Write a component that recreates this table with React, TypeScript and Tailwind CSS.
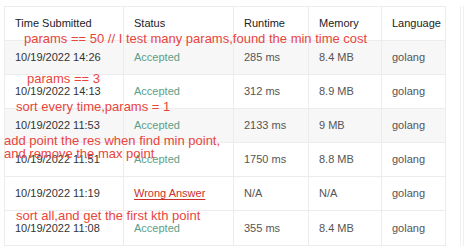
const rows = [
  { time: '10/19/2022 14:26', status: 'Accepted', runtime: '285 ms', memory: '8.4 MB', striped: true },
  { time: '10/19/2022 14:13', status: 'Accepted', runtime: '312 ms', memory: '8.9 MB', striped: false },
  { time: '10/19/2022 11:53', status: 'Accepted', runtime: '2133 ms', memory: '9 MB', striped: true },
  { time: '10/19/2022 11:51', status: 'Accepted', runtime: '1750 ms', memory: '8.8 MB', striped: false },
  { time: '10/19/2022 11:19', status: 'Wrong Answer', runtime: 'N/A', memory: 'N/A', striped: false },
  { time: '10/19/2022 11:08', status: 'Accepted', runtime: '355 ms', memory: '8.4 MB', striped: false },
];

const cols = 'grid grid-cols-[119px_110px_75px_73px_64px]';
const cell = 'flex items-center border-r border-[#ececec] pl-[10px] last:border-r-0';

const notes = [
  { text: 'params == 50 // I test many params,found the min time cost', cls: 'left-[24px] top-[31px]' },
  { text: 'params == 3', cls: 'left-[27px] top-[71px]' },
  { text: 'sort every time,params = 1', cls: 'left-[16px] top-[99px]' },
  { text: 'add point the res when find min point,', cls: 'left-[4px] top-[133px]' },
  { text: 'and remove the max point', cls: 'left-[4px] top-[146px]' },
  { text: 'sort all,and get the first kth point', cls: 'left-[16px] top-[208px]' },
];

export default function App() {
  return (
    <div className="relative h-[249px] w-[474px] overflow-hidden bg-white font-['Liberation_Sans',sans-serif]">
      <div className="flex pl-[4px] pt-[6px]">
        <div className="w-[442px] border border-[#ececec] text-[11px]">
          <div className={`${cols} h-[34px] border-b border-[#ececec] text-[#222222]`}>
            <div className={cell}>Time Submitted</div>
            <div className={cell}>Status</div>
            <div className={cell}>Runtime</div>
            <div className={cell}>Memory</div>
            <div className={cell}>Language</div>
          </div>
          {rows.map((r) => (
            <div
              key={r.time}
              className={`${cols} h-[34px] border-b border-[#ececec] last:border-b-0 ${r.striped ? 'bg-[#f7f7f7]' : 'bg-white'}`}
            >
              <div className={`${cell} text-[#333333]`}>{r.time}</div>
              <div className={cell}>
                {r.status === 'Accepted' ? (
                  <span className="text-[#5c9e8a]">Accepted</span>
                ) : (
                  <span className="text-[#c9302c] underline underline-offset-2">{r.status}</span>
                )}
              </div>
              <div className={`${cell} text-[#555555]`}>{r.runtime}</div>
              <div className={`${cell} text-[#555555]`}>{r.memory}</div>
              <div className={`${cell} text-[#555555]`}>golang</div>
            </div>
          ))}
        </div>
        <div className="ml-[14px] h-[240px] w-[4px] border-x border-[#f0f0f0]" />
      </div>
      {notes.map((n) => (
        <div
          key={n.text}
          className={`absolute whitespace-nowrap text-[13px] leading-[15px] text-[#e8453c] ${n.cls}`}
        >
          {n.text}
        </div>
      ))}
    </div>
  );
}
